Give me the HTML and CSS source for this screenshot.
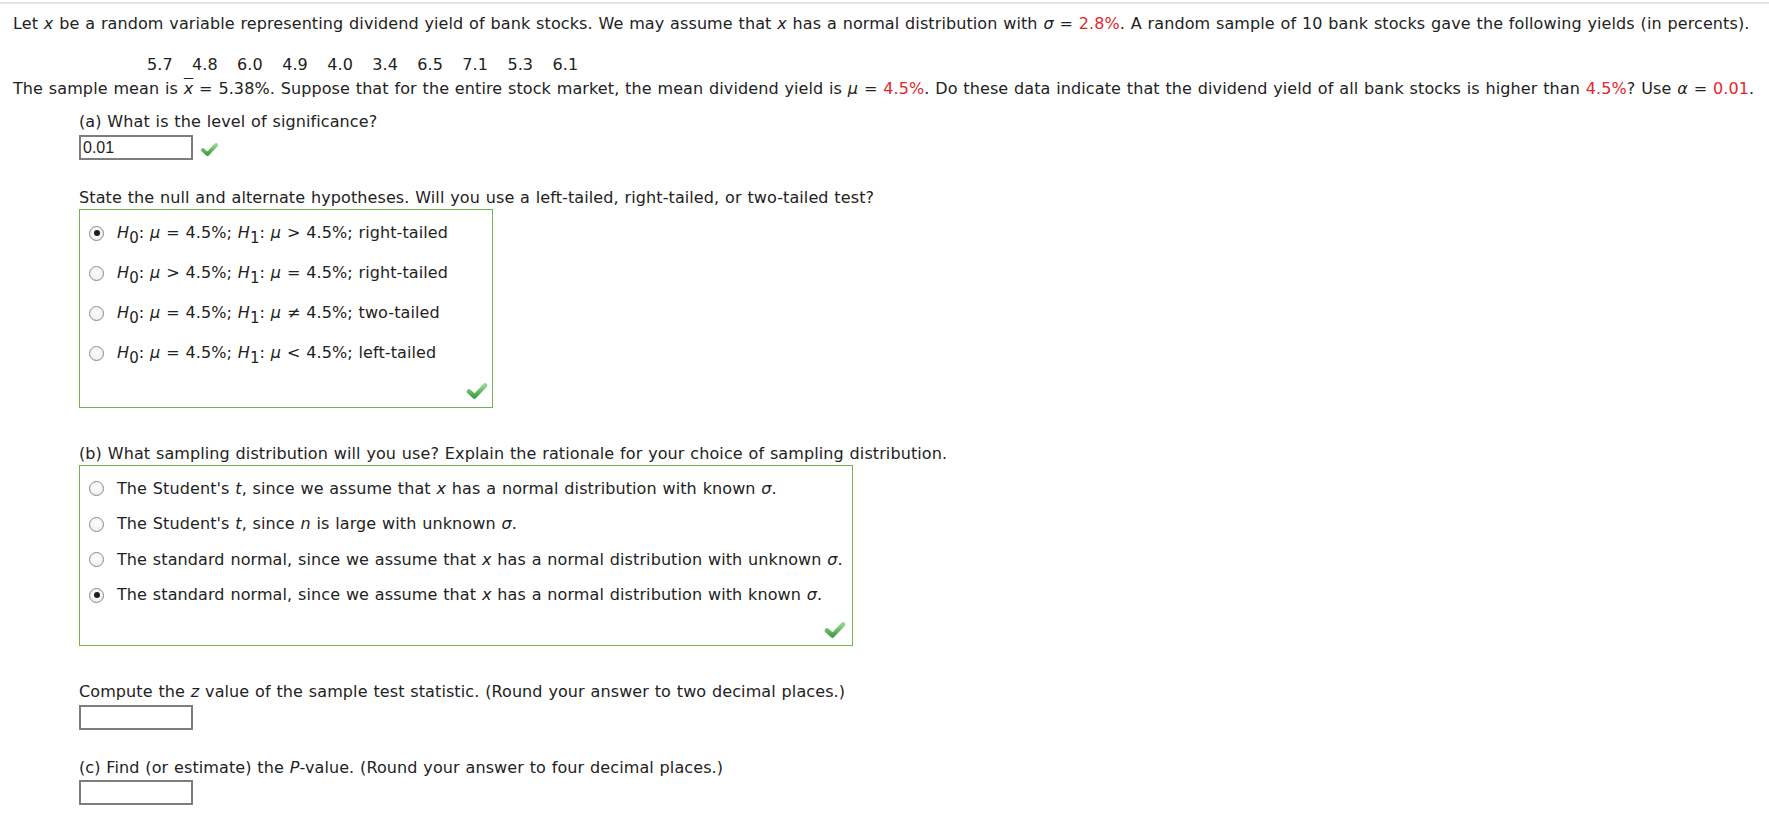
FILE: index.html
```html
<!DOCTYPE html>
<html>
<head>
<meta charset="utf-8">
<link rel="stylesheet" href="styles.css">
</head>
<body>
<svg width="0" height="0" class="defs">
  <defs>
    <linearGradient id="gk" x1="0" y1="0" x2="0" y2="1">
      <stop offset="0" stop-color="#8fd889"/>
      <stop offset="1" stop-color="#45a045"/>
    </linearGradient>
  </defs>
</svg>
<div class="page">
  <p class="line intro">Let <i>x</i> be a random variable representing dividend yield of bank stocks. We may assume that <i>x</i> has a normal distribution with <i>σ</i> = <span class="red">2.8%</span>. A random sample of 10 bank stocks gave the following yields (in percents).</p>
  <div class="data">
    <span>5.7</span><span>4.8</span><span>6.0</span><span>4.9</span><span>4.0</span><span>3.4</span><span>6.5</span><span>7.1</span><span>5.3</span><span>6.1</span>
  </div>
  <p class="line">The sample mean is <i class="xbar">x</i> = 5.38%. Suppose that for the entire stock market, the mean dividend yield is <i>μ</i> = <span class="red">4.5%</span>. Do these data indicate that the dividend yield of all bank stocks is higher than <span class="red">4.5%</span>? Use <i>α</i> = <span class="red">0.01</span>.</p>

  <div class="part">
    <p class="q">(a) What is the level of significance?</p>
    <div class="answer">
      <span class="field">0.01</span>
      <svg class="check small" viewBox="0 0 22 18"><path d="M3 9.5 L8.5 14.5 L19 3.5"/></svg>
    </div>

    <p class="q q-gap">State the null and alternate hypotheses. Will you use a left-tailed, right-tailed, or two-tailed test?</p>
    <div class="choices hyp">
      <div class="opt"><span class="radio on"></span><span><i>H</i><sub>0</sub>: <i>μ</i> = 4.5%; <i>H</i><sub>1</sub>: <i>μ</i> &gt; 4.5%; right-tailed</span></div>
      <div class="opt"><span class="radio"></span><span><i>H</i><sub>0</sub>: <i>μ</i> &gt; 4.5%; <i>H</i><sub>1</sub>: <i>μ</i> = 4.5%; right-tailed</span></div>
      <div class="opt"><span class="radio"></span><span><i>H</i><sub>0</sub>: <i>μ</i> = 4.5%; <i>H</i><sub>1</sub>: <i>μ</i> ≠ 4.5%; two-tailed</span></div>
      <div class="opt"><span class="radio"></span><span><i>H</i><sub>0</sub>: <i>μ</i> = 4.5%; <i>H</i><sub>1</sub>: <i>μ</i> &lt; 4.5%; left-tailed</span></div>
      <div class="mark"><svg class="check" viewBox="0 0 22 18"><path d="M3 9.5 L8.5 14.5 L19 3.5"/></svg></div>
    </div>

    <p class="q box-gap">(b) What sampling distribution will you use? Explain the rationale for your choice of sampling distribution.</p>
    <div class="choices dist">
      <div class="opt"><span class="radio"></span><span>The Student's <i>t</i>, since we assume that <i>x</i> has a normal distribution with known <i>σ</i>.</span></div>
      <div class="opt"><span class="radio"></span><span>The Student's <i>t</i>, since <i>n</i> is large with unknown <i>σ</i>.</span></div>
      <div class="opt"><span class="radio"></span><span>The standard normal, since we assume that <i>x</i> has a normal distribution with unknown <i>σ</i>.</span></div>
      <div class="opt"><span class="radio on"></span><span>The standard normal, since we assume that <i>x</i> has a normal distribution with known <i>σ</i>.</span></div>
      <div class="mark"><svg class="check" viewBox="0 0 22 18"><path d="M3 9.5 L8.5 14.5 L19 3.5"/></svg></div>
    </div>

    <p class="q box-gap">Compute the <i>z</i> value of the sample test statistic. (Round your answer to two decimal places.)</p>
    <div class="answer"><span class="field"></span></div>

    <p class="q q-gap">(c) Find (or estimate) the <i>P</i>-value. (Round your answer to four decimal places.)</p>
    <div class="answer tight"><span class="field"></span></div>
  </div>
</div>
</body>
</html>
```

FILE: styles.css
```css
html, body {
  margin: 0;
  padding: 0;
  background: #ffffff;
}

.defs {
  position: absolute;
  width: 0;
  height: 0;
}

.page {
  margin-top: 2px;
  border-top: 2px solid #e4e4e4;
  padding: 10px 10px 0 13px;
  font-family: "DejaVu Sans", Verdana, sans-serif;
  font-size: 16px;
  line-height: 20px;
  letter-spacing: 0.1px;
  word-spacing: 0.6px;
  color: #222222;
}

p {
  margin: 0;
}

.line {
  white-space: nowrap;
}

.red {
  color: #e3262d;
}

i {
  font-style: italic;
}

.xbar {
  text-decoration: overline;
}

.data {
  display: flex;
  gap: 19.3px;
  margin: 21px 0 4px 134px;
}

.part {
  padding-left: 66px;
}

.q {
  margin-top: 13px;
  white-space: nowrap;
}

.q-gap {
  margin-top: 28px;
}

.box-gap {
  margin-top: 36px;
}

.answer {
  display: flex;
  align-items: center;
  margin-top: 3px;
  height: 25px;
}

.answer.tight {
  margin-top: 2px;
}

.field {
  box-sizing: border-box;
  width: 114px;
  height: 25px;
  border: 2px solid #7d7d7d;
  padding: 1px 2px;
  font-family: "Liberation Sans", Arial, sans-serif;
  font-size: 16px;
  line-height: 19px;
  letter-spacing: 0;
  color: #222222;
}

.check {
  width: 22px;
  height: 18px;
  display: block;
}

.check path {
  fill: none;
  stroke: url(#gk);
  stroke-width: 4.6;
  stroke-linecap: round;
  stroke-linejoin: round;
}

.check.small {
  width: 19px;
  height: 15px;
  margin-left: 7px;
  margin-top: 3px;
}

.choices {
  box-sizing: border-box;
  margin-top: 1px;
  border: 1px solid #77b054;
  padding-left: 9px;
}

.hyp {
  width: 414px;
  padding-top: 3px;
  padding-right: 4px;
}

.hyp .opt {
  height: 40px;
}

.hyp .mark {
  height: 34px;
}

.dist {
  width: 774px;
  padding-top: 5px;
  padding-right: 6px;
}

.dist .opt {
  height: 35.5px;
}

.dist .mark {
  height: 32px;
}

.opt {
  display: flex;
  align-items: center;
  gap: 13px;
  white-space: nowrap;
}

.radio {
  box-sizing: border-box;
  flex: none;
  width: 15px;
  height: 15px;
  border-radius: 50%;
  border: 1px solid #8a8a8a;
  background: radial-gradient(circle at 50% 40%, #ffffff 0%, #f3f3f3 60%, #dcdcdc 100%);
  position: relative;
}

.radio.on::after {
  content: "";
  position: absolute;
  left: 3.5px;
  top: 3.5px;
  width: 6px;
  height: 6px;
  border-radius: 50%;
  background: #1e1e1e;
}

sub {
  font-size: 15px;
  line-height: 0;
  vertical-align: -5px;
}

.mark {
  display: flex;
  justify-content: flex-end;
  align-items: flex-start;
}

.hyp .mark .check {
  margin-top: 9px;
}

.dist .mark .check {
  margin-top: 8px;
}
```
